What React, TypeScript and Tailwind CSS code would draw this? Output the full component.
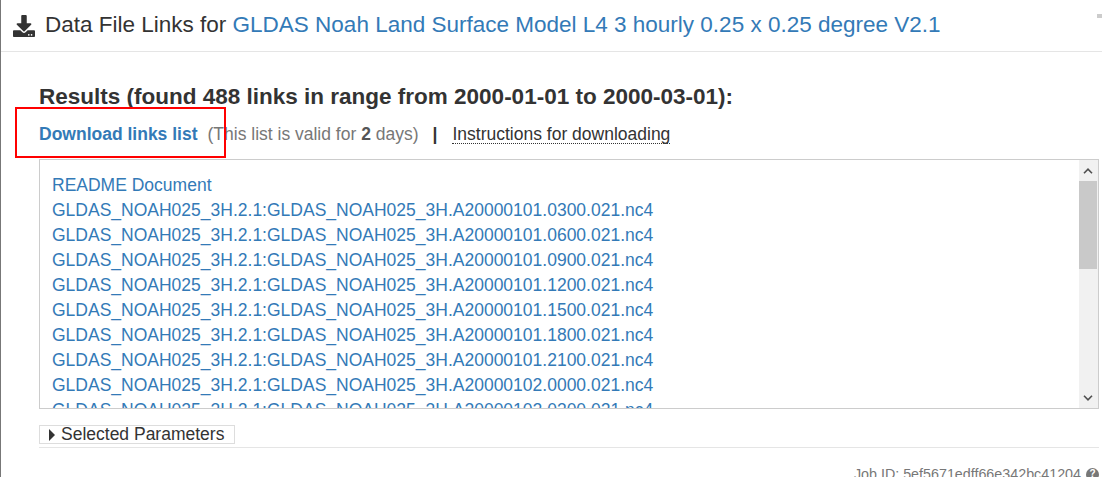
import React from 'react';

const files = [
    '20000101.0300',
    '20000101.0600',
    '20000101.0900',
    '20000101.1200',
    '20000101.1500',
    '20000101.1800',
    '20000101.2100',
    '20000102.0000',
    '20000102.0300',
    '20000102.0600',
];

export default function App() {
    return (
        <div className="relative h-[477px] w-[1102px] overflow-hidden border-l border-l-[#777] bg-white font-['Liberation_Sans',Arial,sans-serif] text-[#333]">
            {/* Modal header */}
            <div className="flex h-[52px] items-center border-b border-[#e5e5e5] pl-[12px]">
                <svg viewBox="0 0 512 512" className="h-[22px] w-[22px] fill-[#333]">
                    <path d="M216 0h80c13 0 24 11 24 24v168h88c18 0 27 21 14 34L270 378c-8 8-20 8-28 0L90 226c-13-13-4-34 14-34h88V24c0-13 11-24 24-24zm296 376v112c0 13-11 24-24 24H24c-13 0-24-11-24-24V376c0-13 11-24 24-24h147l49 49c20 20 52 20 72 0l49-49h147c13 0 24 11 24 24zm-124 88c0-11-9-20-20-20s-20 9-20 20 9 20 20 20 20-9 20-20zm64 0c0-11-9-20-20-20s-20 9-20 20 9 20 20 20 20-9 20-20z" />
                </svg>
                <h4 className="ml-[10px] text-[22.5px] leading-none whitespace-nowrap">
                    Data File Links for <a className="text-[#337ab7]">GLDAS Noah Land Surface Model L4 3 hourly 0.25 x 0.25 degree V2.1</a>
                </h4>
            </div>

            {/* Clipped close button */}
            <div className="absolute top-[14px] right-0 h-[4px] w-[5px] bg-[#ccc]" />

            <div className="pl-[38px] pr-[3px]">
                <h3 className="mt-[32px] text-[22.5px] leading-[26px] font-bold whitespace-nowrap">Results (found 488 links in range from 2000-01-01 to 2000-03-01):</h3>

                <div className="mt-[12px] flex h-[24px] items-center text-[17.5px] whitespace-pre">
                    <a className="font-bold text-[#337ab7]">Download links list</a>
                    <span className="ml-[10px] text-[#777]">
                        (This list is valid for <b className="text-[#555]">2</b> days)
                    </span>
                    <span className="ml-[14px] font-bold">|</span>
                    <a className="ml-[15px] border-b border-dotted border-[#333] leading-[18px]">Instructions for downloading</a>
                </div>

                {/* Links list */}
                <div className="mt-[13px] flex h-[250px] w-[1060px] border border-[#ccc]">
                    <div className="min-w-0 flex-1 overflow-hidden pt-[13px] pl-[12px] text-[17.5px] leading-[25px] text-[#337ab7]">
                        <div>README Document</div>
                        {files.map((f) => (
                            <div key={f}>GLDAS_NOAH025_3H.2.1:GLDAS_NOAH025_3H.A{f}.021.nc4</div>
                        ))}
                    </div>
                    <div className="flex w-[19px] shrink-0 flex-col bg-[#f1f1f1] pr-px">
                        <div className="flex h-[21px] items-center justify-center">
                            <svg viewBox="0 0 10 6" className="h-[6px] w-[10px] fill-none stroke-[#505050] stroke-[1.6]">
                                <path d="M1 5.2 5 1.2 9 5.2" />
                            </svg>
                        </div>
                        <div className="h-[88px] bg-[#c9c9c9]" />
                        <div className="flex-1" />
                        <div className="flex h-[21px] items-center justify-center">
                            <svg viewBox="0 0 10 6" className="h-[6px] w-[10px] fill-none stroke-[#505050] stroke-[1.6]">
                                <path d="M1 .8 5 4.8 9 .8" />
                            </svg>
                        </div>
                    </div>
                </div>

                <div className="mt-[16px] flex h-[19px] w-[196px] items-center border border-[#ddd] pl-[9px] text-[17.5px] whitespace-nowrap">
                    <span className="mr-[6px] h-0 w-0 border-y-[6px] border-l-[6px] border-y-transparent border-l-[#333]" />
                    Selected Parameters
                </div>
                <div className="mt-[3px] border-t border-[#e5e5e5]" />

                <div className="mt-[17px] flex items-center justify-end text-[14.3px] leading-[18px] text-[#777]">
                    Job ID: 5ef5671edff66e342bc41204
                    <span className="ml-[5px] flex h-[13px] w-[13px] items-center justify-center rounded-full bg-[#777] text-[10px] font-bold text-white">?</span>
                </div>
            </div>

            {/* Annotation */}
            <div className="absolute top-[107px] left-[14px] h-[51px] w-[211px] border-2 border-[#f00]" />
        </div>
    );
}
